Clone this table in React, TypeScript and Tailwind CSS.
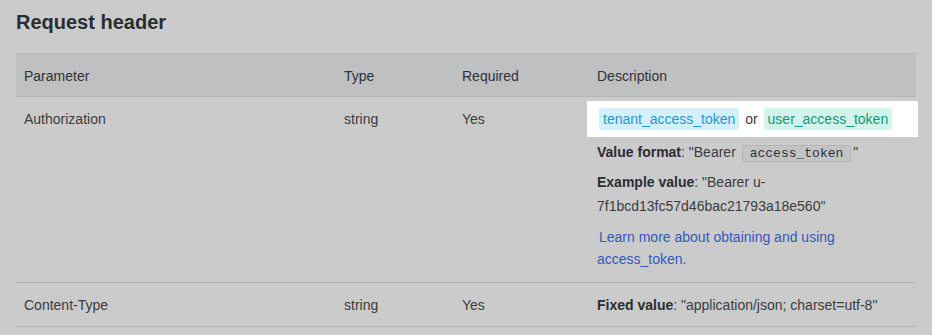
const rows = [
  { name: 'Authorization', type: 'string', required: 'Yes' },
  { name: 'Content-Type', type: 'string', required: 'Yes' },
];

const Tag = ({ children, tone }: { children: string; tone: 'blue' | 'green' }) => (
  <span
    className={`mx-[2px] inline-block rounded-[3px] px-[4px] leading-[22px] ${
      tone === 'blue' ? 'bg-[#d4f0fb] text-[#1b9ad3]' : 'bg-[#d3f4ec] text-[#0f9a7b]'
    }`}
  >
    {children}
  </span>
);

export default function App() {
  return (
    <div className="min-h-[335px] w-full bg-[#cbcbcb] px-4 pt-[8px] font-['Liberation_Sans',Arial,sans-serif] text-[14px] text-[#3a3c40]">
      <h2 className="text-[20px] font-semibold leading-[28px] text-[#2a2d33]">Request header</h2>

      <table className="mt-[17px] w-[900px] table-fixed border-collapse">
        <colgroup>
          <col className="w-[320px]" />
          <col className="w-[118px]" />
          <col className="w-[135px]" />
          <col className="w-[327px]" />
        </colgroup>
        <thead>
          <tr className="border-y border-[#b4b4b5] bg-[#bfc0c1] text-left text-[#2f3136]">
            <th className="h-[43px] px-2 pt-[2px] font-normal">Parameter</th>
            <th className="px-2 pt-[2px] font-normal">Type</th>
            <th className="px-2 pt-[2px] font-normal">Required</th>
            <th className="px-2 pt-[2px] font-normal">Description</th>
          </tr>
        </thead>
        <tbody className="leading-[22px]">
          <tr className="border-b border-[#b4b4b5] align-top">
            <td className="px-2 pb-[12px] pt-[11px]">{rows[0].name}</td>
            <td className="px-2 pt-[11px]">{rows[0].type}</td>
            <td className="px-2 pt-[11px]">{rows[0].required}</td>
            <td className="px-2 pb-[12px] pt-[11px]">
              <div className="-mx-[10px] -mt-[7px] mb-[4px] bg-white px-[10px] py-[7px] text-[#3a3c40]">
                <Tag tone="blue">tenant_access_token</Tag> or <Tag tone="green">user_access_token</Tag>
              </div>
              <p>
                <b className="text-[#2b2d31]">Value format</b>: "Bearer{' '}
                <code className="mx-[2px] rounded-[2px] border border-[#b5b5b5] bg-[#c4c4c4] px-[7px] font-['Liberation_Mono',monospace] text-[13px] leading-[18px] text-[#2e3034]">
                  access_token
                </code>
                "
              </p>
              <p className="mt-[7px] leading-[24px]">
                <b className="text-[#2b2d31]">Example value</b>: "Bearer u-7f1bcd13fc57d46bac21793a18e560"
              </p>
              <p className="mt-[8px]">
                <a href="#" className="pl-[2px] text-[#3459bd]">
                  Learn more about obtaining and using access_token.
                </a>
              </p>
            </td>
          </tr>
          <tr className="border-b border-[#b4b4b5] align-top">
            <td className="h-[44px] px-2 pt-[11px]">{rows[1].name}</td>
            <td className="px-2 pt-[11px]">{rows[1].type}</td>
            <td className="px-2 pt-[11px]">{rows[1].required}</td>
            <td className="px-2 pt-[11px]">
              <b className="text-[#2b2d31]">Fixed value</b>: "application/json; charset=utf-8"
            </td>
          </tr>
        </tbody>
      </table>
    </div>
  );
}
